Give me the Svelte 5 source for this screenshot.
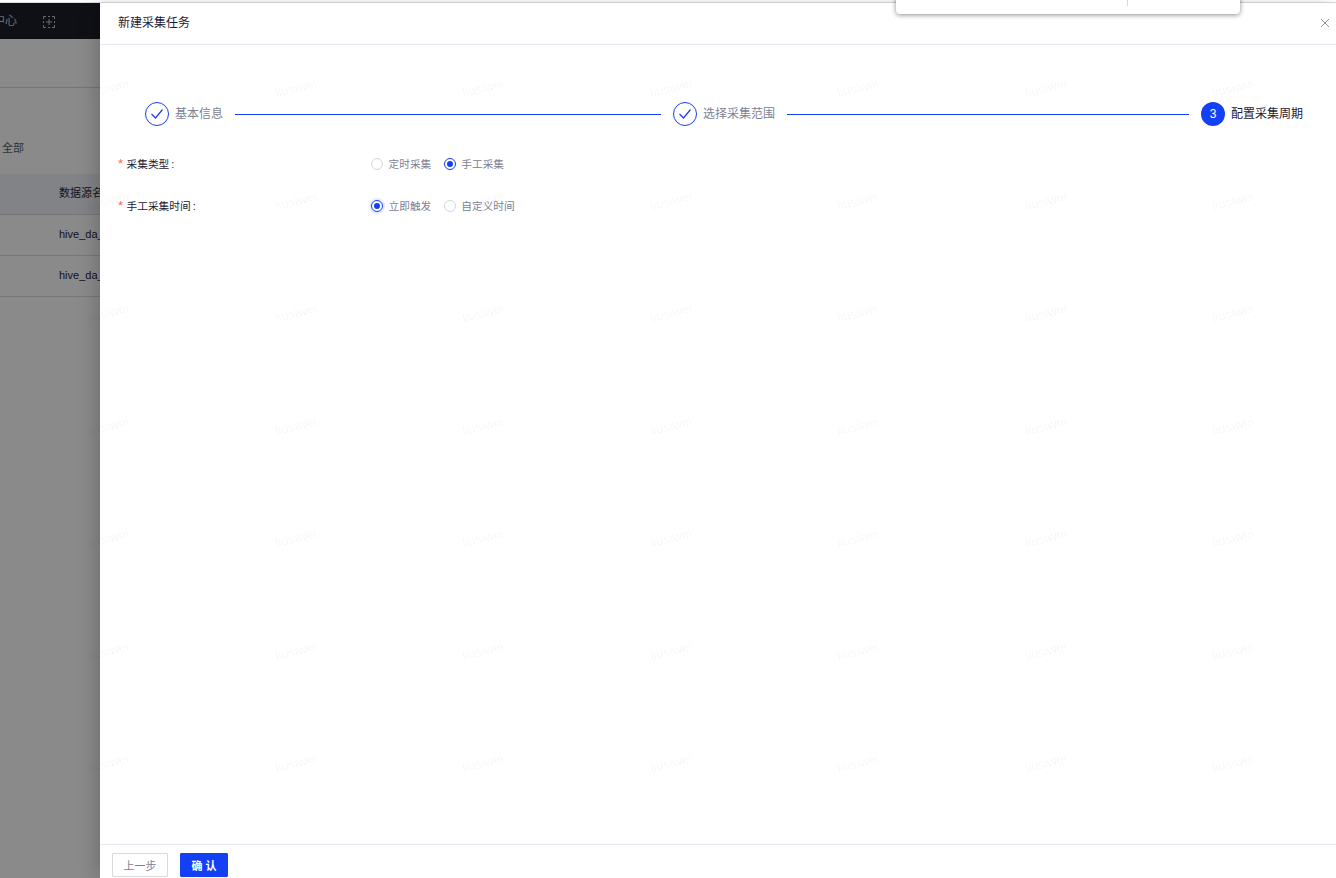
<script>
  const steps = [
    { label: '基本信息', done: true },
    { label: '选择采集范围', done: true },
    { label: '配置采集周期', done: false, num: 3 }
  ];

  const fields = [
    { label: '采集类型', options: [{ text: '定时采集' }, { text: '手工采集', checked: true }] },
    { label: '手工采集时间', options: [{ text: '立即触发', checked: true, focus: true }, { text: '自定义时间' }] }
  ];

  const marks = Array.from({ length: 49 });
</script>

<div class="page">
  <div class="top-strip"></div>
  <header class="nav">
    <span class="nav-text">中心</span>
    <svg class="nav-icon" width="12" height="12" viewBox="0 0 12 12" fill="none" stroke="#c4c4c8" stroke-width="1">
      <path d="M.5 3V.5H3M5 .5h2M9 .5h2.500V3M11.500 5v2M11.500 9v2.500H9M7 11.500H5M3 11.500H.5V9M.5 7V5" />
      <path d="M6 3v6M3 6h6" />
    </svg>
  </header>
  <div class="subbar"></div>
  <div class="filter"><span>全部</span></div>
  <div class="row head"><span>数据源名称</span></div>
  <div class="row"><span>hive_da_task</span></div>
  <div class="row"><span>hive_da_task</span></div>

  <div class="backdrop"></div>

  <div class="popover"><i></i></div>

  <section class="drawer">
    <div class="drawer-head">
      <span>新建采集任务</span>
      <svg width="8" height="8" viewBox="0 0 8 8" stroke="#8f93a3" stroke-width="1" fill="none">
        <path d="M0 0l8 8M8 0l-8 8" />
      </svg>
    </div>

    <div class="drawer-body">
      <div class="steps">
        {#each steps as step, i}
          <div class="step" class:current={!step.done}>
            {#if step.done}
              <span class="dot done">
                <svg width="14" height="12" viewBox="0 0 14 12" fill="none" stroke="#1440f5" stroke-width="1.200">
                  <path d="M1.500 6l4 4 7-8.500" />
                </svg>
              </span>
            {:else}
              <span class="dot active">{step.num}</span>
            {/if}
            <span class="step-label">{step.label}</span>
          </div>
          {#if i < steps.length - 1}
            <div class="line"></div>
          {/if}
        {/each}
      </div>

      {#each fields as field}
        <div class="field">
          <div class="field-label"><em>*</em>{field.label}<b>:</b></div>
          <div class="radios">
            {#each field.options as opt}
              <label class="radio">
                <span class="circle" class:checked={opt.checked} class:focus={opt.focus}></span>
                <span>{opt.text}</span>
              </label>
            {/each}
          </div>
        </div>
      {/each}
    </div>

    <footer class="drawer-foot">
      <button class="prev">上一步</button>
      <button class="ok">确 认</button>
    </footer>
  </section>

  <div class="watermarks">
    {#each marks as _}
      <span>liusiwei</span>
    {/each}
  </div>
</div>

<style>
  :global(body) {
    margin: 0;
    background: #fff;
  }

  .page {
    position: relative;
    width: 1336px;
    height: 878px;
    overflow: hidden;
    background: #fff;
    font-family: "Liberation Sans", "Noto Sans CJK SC", sans-serif;
    font-size: 10.700px;
    color: #1b2033;
  }

  .top-strip {
    height: 2px;
    border-bottom: 1px solid #dcdcdf;
  }

  .nav {
    height: 36px;
    background: #1c1f27;
    display: flex;
    align-items: center;
  }

  .nav-text {
    margin-left: -7px;
    font-size: 12px;
    line-height: 14px;
    color: #c8ccc8;
  }

  .nav-icon {
    margin: 1px 0 0 26px;
  }

  .subbar {
    height: 48px;
    border-bottom: 1px solid #d8d8d8;
  }

  .filter {
    height: 86px;
    box-sizing: border-box;
    padding: 52px 0 0 2px;
    font-size: 11px;
    line-height: 16px;
    color: #5a5e6b;
  }

  .row {
    height: 41px;
    box-sizing: border-box;
    border-bottom: 1px solid #dcdcdc;
    display: flex;
    align-items: center;
    padding: 0 0 2px 59px;
    font-size: 11px;
    line-height: 14px;
    color: #2a1d33;
  }

  .row.head {
    background: #f0f3f8;
  }

  .backdrop {
    position: absolute;
    left: 0;
    right: 0;
    top: 3px;
    bottom: 0;
    background: rgba(0, 0, 0, 0.46);
  }

  .popover {
    position: absolute;
    left: 896px;
    top: -10px;
    width: 344px;
    height: 24px;
    background: #fff;
    border-radius: 4px;
    box-shadow: 0 1px 5px rgba(0, 0, 0, 0.45);
    z-index: 2;
  }

  .popover i {
    position: absolute;
    left: 231px;
    top: 0;
    height: 16px;
    width: 1px;
    background: #d8d8dc;
  }

  .drawer {
    position: absolute;
    left: 100px;
    right: 0;
    top: 3px;
    bottom: 0;
    background: #fff;
    display: flex;
    flex-direction: column;
    box-shadow: -6px 0 16px rgba(0, 0, 0, 0.16);
  }

  .drawer-head {
    height: 42px;
    flex: none;
    box-sizing: border-box;
    border-bottom: 1px solid #e6e7ee;
    display: flex;
    align-items: center;
    justify-content: space-between;
    padding: 0 7px 2px 18px;
    font-size: 12px;
    line-height: 16px;
    color: #1b2033;
  }

  .drawer-body {
    flex: 1;
  }

  .steps {
    display: flex;
    align-items: center;
    padding: 57px 33px 0 45px;
    height: 24px;
  }

  .step {
    display: flex;
    align-items: center;
    gap: 6px;
    font-size: 12px;
    color: #7d8194;
    flex: none;
  }

  .step.current {
    color: #1b2033;
  }

  .step-label {
    line-height: 16px;
    padding-bottom: 1px;
  }

  .dot {
    width: 24px;
    height: 24px;
    box-sizing: border-box;
    border-radius: 50%;
    display: flex;
    align-items: center;
    justify-content: center;
  }

  .dot.done {
    border: 1px solid #1440f5;
  }

  .dot.active {
    background: #1440f5;
    color: #fff;
    font-size: 12px;
  }

  .line {
    height: 1px;
    background: #1440f5;
    margin: 0 12px;
  }

  .line:nth-child(2) {
    flex: 426;
  }

  .line:nth-child(4) {
    flex: 402;
  }

  .field {
    display: flex;
    align-items: center;
    height: 16px;
    margin-top: 26px;
    padding-left: 18px;
  }

  .steps + .field {
    margin-top: 29px;
  }

  .field-label {
    width: 253px;
    flex: none;
    color: #1b2033;
  }

  .field-label b {
    font-weight: 400;
    margin-left: 2px;
  }

  .field-label em {
    font-style: normal;
    font-size: 13px;
    line-height: 10px;
    color: #ff6a4d;
    display: inline-block;
    width: 8.500px;
  }

  .radios {
    display: flex;
    gap: 12.500px;
  }

  .radio {
    display: flex;
    align-items: center;
    gap: 5.500px;
    color: #7d8194;
  }

  .circle {
    width: 12px;
    height: 12px;
    margin-top: 1px;
    box-sizing: border-box;
    border: 1px solid #d5d6dc;
    border-radius: 50%;
    background: #fff;
    position: relative;
  }

  .circle.checked {
    border-color: #1440f5;
  }

  .circle.checked::after {
    content: "";
    position: absolute;
    left: 2px;
    top: 2px;
    width: 6px;
    height: 6px;
    border-radius: 50%;
    background: #1440f5;
  }

  .circle.focus {
    box-shadow: 0 0 0 2px rgba(20, 64, 245, 0.1);
  }

  .drawer-foot {
    height: 34px;
    flex: none;
    box-sizing: border-box;
    border-top: 1px solid #e6e7ee;
    display: flex;
    align-items: flex-start;
    gap: 12px;
    padding: 8px 0 0 12px;
  }

  button {
    height: 24px;
    box-sizing: border-box;
    font-family: inherit;
    font-size: 11px;
    border-radius: 1px;
    padding: 0;
  }

  .prev {
    width: 56px;
    background: #fff;
    border: 1px solid #d9dade;
    color: #7d8194;
  }

  .ok {
    width: 48px;
    background: #1440f5;
    border: 1px solid #1440f5;
    color: #fff;
    font-weight: 700;
  }

  .watermarks {
    position: absolute;
    left: 87px;
    top: 64px;
    display: grid;
    grid-template-columns: repeat(7, 187.500px);
    grid-auto-rows: 112.500px;
    pointer-events: none;
    z-index: 3;
  }

  .watermarks span {
    font-size: 13px;
    line-height: 48px;
    height: 48px;
    width: 44px;
    color: rgba(20, 20, 40, 0.05);
    transform: rotate(-15deg);
  }
</style>
